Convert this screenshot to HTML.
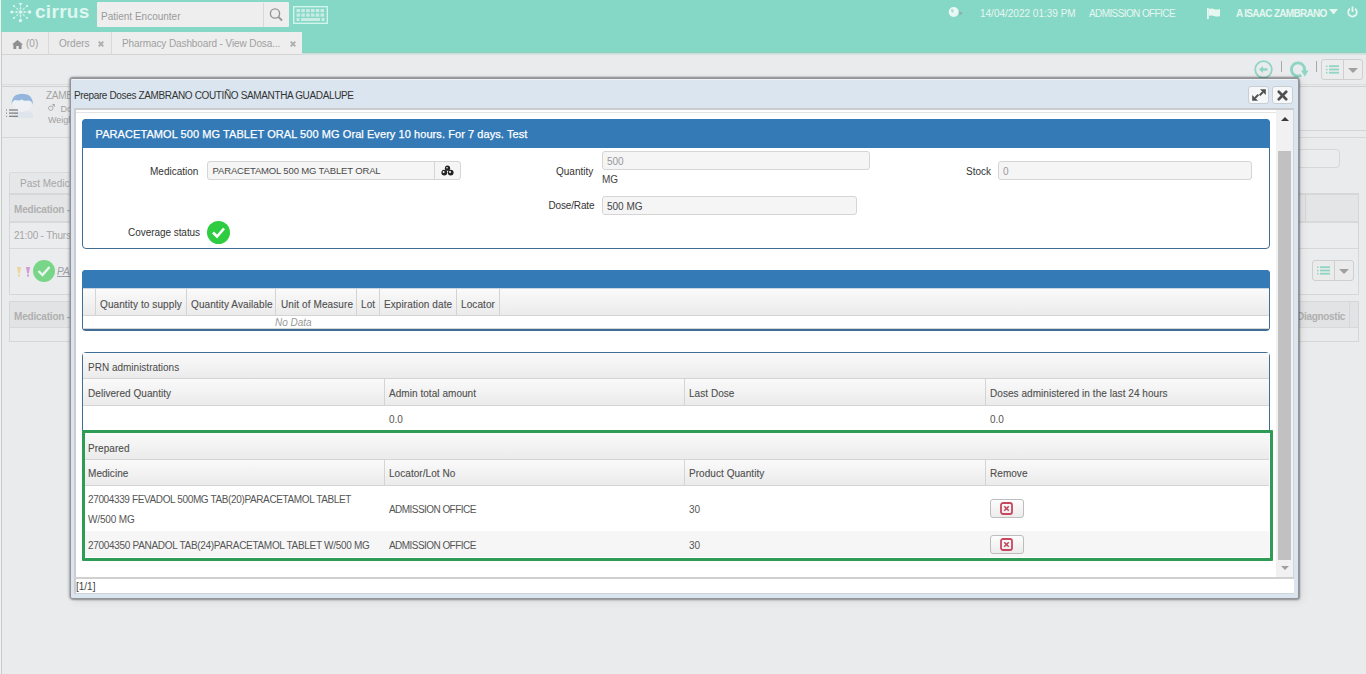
<!DOCTYPE html>
<html><head><meta charset="utf-8">
<style>
*{box-sizing:border-box;margin:0;padding:0}
html,body{width:1366px;height:674px;overflow:hidden;background:#eaebed;font-family:"Liberation Sans",sans-serif;position:relative}
.a{position:absolute}
.t{position:absolute;white-space:nowrap;line-height:1}
.th{background:linear-gradient(#fafafa,#ebebeb)}
</style></head>
<body>
<div class="a" style="left:0px;top:0px;width:1366px;height:52px;background:#86d8c6"></div>
<div class="a" style="left:0px;top:52px;width:1366px;height:1px;background:#93cbbc"></div>
<div class="a" style="left:0px;top:53px;width:1366px;height:1px;background:#c6e4de"></div>
<div class="a" style="left:0px;top:54px;width:1366px;height:1px;background:#d6e0df"></div>
<svg class="a" style="left:10px;top:2px" width="22" height="21" viewBox="0 0 22 21"><g stroke="#c8efe6" stroke-width="0.8" opacity="0.8"><line x1="10.5" y1="3" x2="10.5" y2="18"/><line x1="2" y1="10" x2="19.5" y2="10"/><line x1="4" y1="4" x2="17" y2="16"/><line x1="17" y1="4" x2="4" y2="16"/></g><g fill="#def8f2"><path d="M8.5 1 H12.5 L10.5 3.8Z"/><circle cx="10.5" cy="18.6" r="1.7"/><circle cx="1.8" cy="10" r="1.5"/><circle cx="19.6" cy="10" r="1.7"/><circle cx="4" cy="4" r="1"/><circle cx="17" cy="4" r="1.1"/><circle cx="4" cy="16" r="1.1"/><circle cx="17" cy="16" r="1"/><circle cx="10.5" cy="10" r="1.5"/><circle cx="10.5" cy="6.3" r="0.9"/><circle cx="10.5" cy="13.8" r="0.9"/><circle cx="6.5" cy="10" r="0.9"/><circle cx="14.5" cy="10" r="0.9"/><circle cx="7.3" cy="7" r="0.7"/><circle cx="13.7" cy="7" r="0.7"/><circle cx="7.3" cy="13" r="0.7"/><circle cx="13.7" cy="13" r="0.7"/></g></svg>
<div class="t" style="left:35px;top:2.12px;font-size:19px;font-weight:bold;color:#def7f1;letter-spacing:0.3px">cirrus</div>
<div class="a" style="left:97px;top:2px;width:192px;height:25px;background:#eeeeee;border-radius:1px"></div>
<div class="a" style="left:263px;top:3px;width:1px;height:24px;background:#d8d8d8"></div>
<div class="t" style="left:101px;top:11.84px;font-size:10px;color:#9a9a9a">Patient Encounter</div>
<svg class="a" style="left:268px;top:6px" width="16" height="16" viewBox="0 0 16 16"><circle cx="7" cy="7.5" r="4.6" fill="none" stroke="#959595" stroke-width="1.4"/><line x1="10.4" y1="10.9" x2="14" y2="14.5" stroke="#959595" stroke-width="1.9"/></svg>
<svg class="a" style="left:293px;top:6px" width="35" height="18" viewBox="0 0 35 18"><rect x="0.7" y="0.7" width="33.6" height="16.6" fill="none" stroke="#d5f7ef" stroke-width="1.3"/><g fill="#c9ece4"><rect x="3.5" y="3" width="3.6" height="3.2"/><rect x="8.3" y="3" width="3.6" height="3.2"/><rect x="13.1" y="3" width="3.6" height="3.2"/><rect x="17.9" y="3" width="3.6" height="3.2"/><rect x="22.7" y="3" width="3.6" height="3.2"/><rect x="27.5" y="3" width="3.6" height="3.2"/><rect x="3.5" y="7.5" width="3.6" height="3.2"/><rect x="8.3" y="7.5" width="3.6" height="3.2"/><rect x="13.1" y="7.5" width="3.6" height="3.2"/><rect x="17.9" y="7.5" width="3.6" height="3.2"/><rect x="22.7" y="7.5" width="3.6" height="3.2"/><rect x="27.5" y="7.5" width="3.6" height="3.2"/><rect x="3.5" y="12" width="3" height="3"/><rect x="8" y="12" width="19" height="3"/><rect x="28.5" y="12" width="3" height="3"/></g></svg>
<svg class="a" style="left:948px;top:6px" width="16" height="12" viewBox="0 0 16 12"><circle cx="5.7" cy="6" r="5" fill="#e8f8f4"/><path d="M3 3.5 Q4.5 2.5 5.5 4 Q6.5 5.5 5 6.5 Q4 7 3.2 5.5Z M6.5 8.5 Q7.5 8 7.5 9.5Z" fill="#b5dcd3"/><path d="M11 5 L15 7 L11.5 9.5Z" fill="#8fb0a8"/></svg>
<div class="t" style="left:980px;top:8.84px;font-size:10px;color:#e6f6f1">14/04/2022 01:39 PM</div>
<div class="t" style="left:1089px;top:8.84px;font-size:10px;color:#e6f6f1;letter-spacing:-0.6px">ADMISSION OFFICE</div>
<svg class="a" style="left:1207px;top:8px" width="14" height="11" viewBox="0 0 14 11"><rect x="0" y="0" width="1.8" height="11" fill="#e6f6f1"/><path d="M1.8 1 Q4.5 0 7 1 T13 1 L13 8 Q10 9 7 8 T1.8 8Z" fill="#e6f6f1"/></svg>
<div class="t" style="left:1236px;top:8.84px;font-size:10px;color:#e6f6f1;font-weight:bold;letter-spacing:-0.7px">A ISAAC ZAMBRANO</div>
<svg class="a" style="left:1329px;top:9px" width="9" height="6" viewBox="0 0 9 6"><path d="M0 0H9L4.5 5.5Z" fill="#e6f6f1"/></svg>
<svg class="a" style="left:1347px;top:6px" width="11" height="12" viewBox="0 0 11 12"><path d="M3 2.8 A4.3 4.3 0 1 0 8 2.8" fill="none" stroke="#e6f6f1" stroke-width="1.8"/><line x1="5.5" y1="0.5" x2="5.5" y2="6" stroke="#e6f6f1" stroke-width="1.8"/></svg>
<div class="a" style="left:2px;top:32px;width:300px;height:22px;background:#ececec"></div>
<div class="a" style="left:48px;top:32px;width:1px;height:22px;background:#d9d9d9"></div>
<div class="a" style="left:111px;top:32px;width:1px;height:22px;background:#d9d9d9"></div>
<div class="a" style="left:112px;top:32px;width:190px;height:22px;background:#eeeeee"></div>
<svg class="a" style="left:12px;top:40px" width="11" height="9" viewBox="0 0 11 9"><path d="M5.5 0 L11 4.6 L9.6 4.6 L9.6 9 L6.7 9 L6.7 6 L4.3 6 L4.3 9 L1.4 9 L1.4 4.6 L0 4.6Z" fill="#8f8f8f"/></svg>
<div class="t" style="left:26px;top:39.03px;font-size:10px;color:#a0a0a0">(0)</div>
<div class="t" style="left:59px;top:39.03px;font-size:10px;color:#a0a0a0">Orders</div>
<svg class="a" style="left:98px;top:41px" width="6" height="6" viewBox="0 0 6 6"><g stroke="#adadad" stroke-width="1.9"><line x1="0.7" y1="0.7" x2="5.3" y2="5.3"/><line x1="5.3" y1="0.7" x2="0.7" y2="5.3"/></g></svg>
<div class="t" style="left:122px;top:39.03px;font-size:10px;color:#a0a0a0;letter-spacing:-0.1px">Pharmacy Dashboard - View Dosa...</div>
<svg class="a" style="left:290px;top:41px" width="6" height="6" viewBox="0 0 6 6"><g stroke="#adadad" stroke-width="1.9"><line x1="0.7" y1="0.7" x2="5.3" y2="5.3"/><line x1="5.3" y1="0.7" x2="0.7" y2="5.3"/></g></svg>
<div class="a" style="left:2px;top:54px;width:300px;height:1px;background:#d3d3d3"></div>
<div class="a" style="left:0px;top:0px;width:1px;height:674px;background:#eef3f2"></div>
<div class="a" style="left:1px;top:32px;width:1px;height:642px;background:#c9cacb"></div>
<svg class="a" style="left:1254px;top:60px" width="19" height="19" viewBox="0 0 19 19"><circle cx="9.5" cy="9.5" r="8.3" fill="none" stroke="#8fd5c3" stroke-width="1.8"/><path d="M5 9.5 L9 6 L9 8.3 L13.5 8.3 L13.5 10.7 L9 10.7 L9 13Z" fill="#8fd5c3"/></svg>
<div class="a" style="left:1281px;top:61px;width:1px;height:11px;background:#a8a8a8"></div>
<svg class="a" style="left:1289px;top:60px" width="22" height="20" viewBox="0 0 22 20"><path d="M15.38 11.21 A6.6 6.6 0 1 0 12.30 15.22" fill="none" stroke="#8fd5c3" stroke-width="2.8"/><path d="M12 10.5 L19.5 10.5 L15.8 16.5Z" fill="#8fd5c3"/></svg>
<div class="a" style="left:1316px;top:61px;width:1px;height:11px;background:#a8a8a8"></div>
<div class="a" style="left:1321px;top:59px;width:42px;height:21px;border:1px solid #cfcfcf;border-radius:3px;background:#ececec"></div>
<div class="a" style="left:1343px;top:60px;width:1px;height:19px;background:#cfcfcf"></div>
<svg class="a" style="left:1326px;top:65px" width="14" height="9" viewBox="0 0 14 9"><g fill="#8fd5c3"><rect x="0" y="0.5" width="1.5" height="1.5"/><rect x="0" y="3.8" width="1.5" height="1.5"/><rect x="0" y="7" width="1.5" height="1.5"/><rect x="3" y="0.3" width="10" height="1.8"/><rect x="3" y="3.6" width="10" height="1.8"/><rect x="3" y="6.8" width="10" height="1.8"/></g></svg>
<svg class="a" style="left:1348px;top:68px" width="10" height="5" viewBox="0 0 10 5"><path d="M0 0H10L5 5Z" fill="#a0a0a0"/></svg>
<div class="a" style="left:2px;top:84px;width:1364px;height:1px;background:#dcdddd"></div>
<div class="a" style="left:2px;top:86px;width:1364px;height:1px;background:#d0d1d2"></div>
<svg class="a" style="left:4px;top:88px" width="36" height="36" viewBox="0 0 36 36"><path d="M10 30 L10 26 Q10 23 18 23 Q29 23 29 26 L29 30Z" fill="#dfe5ec"/><circle cx="18" cy="14.5" r="9.5" fill="#edf1f5"/><path d="M7.5 17 Q7.5 5.8 18 5.8 Q29 5.8 29 17 Q27.5 12 24 12.5 Q20 13.5 18 11.5 Q15 13 11 12 Q8 13 7.5 17Z" fill="#94b6dc"/><g fill="#7a7a7a"><rect x="2" y="21.5" width="1" height="1"/><rect x="2" y="24.6" width="1" height="1"/><rect x="2" y="27.8" width="1" height="1"/><rect x="5" y="21.4" width="9" height="1.2"/><rect x="5" y="24.5" width="9" height="1.2"/><rect x="5" y="27.7" width="9" height="1.2"/></g></svg>
<div class="t" style="left:46px;top:90.83px;font-size:10px;color:#a3a3a3;letter-spacing:-0.3px">ZAMBRANO</div>
<svg class="a" style="left:48px;top:104px" width="7" height="7" viewBox="0 0 7 7"><circle cx="2.8" cy="4.2" r="2.2" fill="none" stroke="#a8a8a8" stroke-width="0.9"/><path d="M4.4 2.6 L6.5 0.5 M4.2 0.5 H6.5 V2.8" fill="none" stroke="#a8a8a8" stroke-width="0.9"/></svg>
<div class="t" style="left:60.5px;top:104.88px;font-size:9px;color:#a3a3a3">Do</div>
<div class="t" style="left:48px;top:115.88px;font-size:9px;color:#a0a0a0">Weight</div>
<div class="a" style="left:1298px;top:130px;width:68px;height:1px;background:#d3d4d5"></div>
<div class="a" style="left:2px;top:137px;width:1364px;height:1px;background:#d6d7d8"></div>
<div class="a" style="left:1250px;top:149px;width:90px;height:19px;border:1px solid #d6d7d8;border-radius:4px;background:#ebeced"></div>
<div class="a" style="left:9px;top:172px;width:81px;height:22px;background:#e6e7e8;border:1px solid #d9dadb;border-bottom:none;border-radius:2px 2px 0 0"></div>
<div class="t" style="left:20px;top:179.03px;font-size:10px;color:#a6a6a6">Past Medications</div>
<div class="a" style="left:9px;top:193px;width:1350px;height:102px;border:1px solid #d6d7d8;border-top:2px solid #d6d7d8;background:#ebeced"></div>
<div class="a" style="left:10px;top:195px;width:1348px;height:28px;background:#e4e5e7;border-bottom:2px solid #d8d9da"></div>
<div class="t" style="left:14px;top:205.03px;font-size:10px;font-weight:bold;color:#b0b0b0;letter-spacing:-0.2px">Medication - Dose</div>
<div class="a" style="left:1305px;top:195px;width:1px;height:26px;background:#d6d7d8"></div>
<div class="t" style="left:14px;top:231.03px;font-size:10px;color:#a6a6a6;letter-spacing:-0.2px">21:00 - Thursday</div>
<div class="a" style="left:10px;top:248px;width:1348px;height:1px;background:#d6d7d8"></div>
<svg class="a" style="left:17px;top:267px" width="4" height="10" viewBox="0 0 4 10"><path d="M0 0 H4 L2.8 6.5 H1.2Z M1 7.5 H3 V9.5 H1Z" fill="#ebd59a"/></svg>
<svg class="a" style="left:26px;top:267px" width="4" height="10" viewBox="0 0 4 10"><path d="M0 0 H4 L2.8 6.5 H1.2Z M1 7.5 H3 V9.5 H1Z" fill="#d59ad3"/></svg>
<div class="a" style="left:33px;top:260px;width:22px;height:22px;border-radius:50%;background:#79d689"></div>
<svg class="a" style="left:37px;top:265px" width="14" height="12" viewBox="0 0 14 12"><path d="M1.5 6 L5.5 10 L12.5 2" fill="none" stroke="#eaf7ec" stroke-width="2.4"/></svg>
<div class="t" style="left:57px;top:266.54px;font-size:10px;font-style:italic;color:#9a9fa8;text-decoration:underline">PARACETAMOL</div>
<div class="a" style="left:1312px;top:260px;width:42px;height:21px;border:1px solid #cfcfcf;border-radius:3px;background:#ebebeb"></div>
<div class="a" style="left:1334px;top:261px;width:1px;height:19px;background:#cfcfcf"></div>
<svg class="a" style="left:1317px;top:266px" width="14" height="9" viewBox="0 0 14 9"><g fill="#8fd5c3"><rect x="0" y="0.5" width="1.5" height="1.5"/><rect x="0" y="3.8" width="1.5" height="1.5"/><rect x="0" y="7" width="1.5" height="1.5"/><rect x="3" y="0.3" width="10" height="1.8"/><rect x="3" y="3.6" width="10" height="1.8"/><rect x="3" y="6.8" width="10" height="1.8"/></g></svg>
<svg class="a" style="left:1339px;top:269px" width="10" height="5" viewBox="0 0 10 5"><path d="M0 0H10L5 5Z" fill="#a0a0a0"/></svg>
<div class="a" style="left:9px;top:301px;width:1350px;height:41px;border:1px solid #d6d7d8;background:#eaebec"></div>
<div class="a" style="left:10px;top:302px;width:1348px;height:26px;background:#e2e3e4;border-bottom:1px solid #d8d9da"></div>
<div class="t" style="left:14px;top:312.04px;font-size:10px;font-weight:bold;color:#b0b0b0;letter-spacing:-0.2px">Medication - Dose</div>
<div class="a" style="left:1349px;top:302px;width:1px;height:26px;background:#d6d7d8"></div>
<div class="t" style="left:1297px;top:312.04px;font-size:10px;font-weight:bold;color:#b0b0b0;letter-spacing:-0.3px">Diagnostic</div>
<div class="a" style="left:70px;top:78px;width:1229px;height:521px;background:#dae5ef;border:1px solid #929498;border-radius:2px;box-shadow:0 -1px 2px rgba(0,0,0,.35),1px 1px 2px rgba(0,0,0,.3),-1px 0 3px rgba(0,0,0,.2),3px 2px 8px rgba(0,0,0,.08),inset 0 1px 0 #eef3f8"></div>
<div class="t" style="left:74px;top:90.63px;font-size:10px;color:#333;letter-spacing:-0.36px">Prepare Doses ZAMBRANO COUTIÑO SAMANTHA GUADALUPE</div>
<div class="a" style="left:1248px;top:86px;width:21px;height:18px;background:#f6f7f8;border:1px solid #c9ced3;border-radius:3px"></div>
<div class="a" style="left:1272px;top:86px;width:21px;height:18px;background:#f6f7f8;border:1px solid #c9ced3;border-radius:3px"></div>
<svg class="a" style="left:1251px;top:88px" width="16" height="14" viewBox="0 0 16 14"><g fill="#505050"><path d="M14.8 1.2 L14.8 7 L9 1.2Z"/><path d="M1.2 12.8 L1.2 7 L7 12.8Z"/></g><g stroke="#505050" stroke-width="2"><line x1="12" y1="4" x2="8.6" y2="7.4"/><line x1="4" y1="10" x2="7.4" y2="6.6"/></g></svg>
<svg class="a" style="left:1277px;top:90px" width="11" height="11" viewBox="0 0 11 11"><g stroke="#505050" stroke-width="2.7" stroke-linecap="round"><line x1="1.8" y1="1.8" x2="9.2" y2="9.2"/><line x1="9.2" y1="1.8" x2="1.8" y2="9.2"/></g></svg>
<div class="a" style="left:74px;top:108px;width:1220px;height:470px;background:#fff;border-top:2px solid #c9cbcc;border-left:2px solid #cdccd0;border-right:1px solid #d0d5de"></div>
<div class="a" style="left:76px;top:112px;width:1200px;height:1px;background:#e3e3e3"></div>
<div class="a" style="left:1276px;top:110px;width:17px;height:467px;background:#f1f1f1"></div>
<div class="a" style="left:1278px;top:151px;width:13px;height:409px;background:#c1c1c1"></div>
<svg class="a" style="left:1281px;top:117px" width="8" height="4" viewBox="0 0 8 4"><path d="M0 4H8L4 0Z" fill="#3a3a3a"/></svg>
<svg class="a" style="left:1281px;top:566px" width="8" height="4" viewBox="0 0 8 4"><path d="M0 0H8L4 4Z" fill="#a0a0a0"/></svg>
<div class="a" style="left:74px;top:577px;width:1220px;height:17px;background:#fff;border-top:2px solid #d0d0d0;border-bottom:1px solid #cfd4d9;border-left:2px solid #cdccd0"></div>
<div class="t" style="left:76px;top:582.03px;font-size:10px;color:#444">[1/1]</div>
<div class="a" style="left:82px;top:119px;width:1188px;height:130px;border:1px solid #3f6d94;border-radius:4px;background:#fff"></div>
<div class="a" style="left:82px;top:119px;width:1188px;height:29px;background:#337ab7;border-radius:4px 4px 0 0"></div>
<div class="t" style="left:95.6px;top:129.19px;font-size:11px;color:#fff;-webkit-text-stroke:0.25px #fff;letter-spacing:0.07px">PARACETAMOL 500 MG TABLET ORAL 500 MG Oral Every 10 hours. For 7 days. Test</div>
<div class="t" style="left:150px;top:166.84px;font-size:10px;color:#333">Medication</div>
<div class="a" style="left:207px;top:161px;width:254px;height:19px;background:#f5f5f5;border:1px solid #d5d5d5;border-radius:3px"></div>
<div class="a" style="left:434px;top:162px;width:1px;height:17px;background:#d5d5d5"></div>
<div class="t" style="left:212.5px;top:166.06px;font-size:9.5px;color:#4a4a4a;letter-spacing:-0.15px">PARACETAMOL 500 MG TABLET ORAL</div>
<svg class="a" style="left:441px;top:165px" width="13" height="11" viewBox="0 0 13 11"><g fill="#222"><circle cx="6.5" cy="3.2" r="2.6"/><circle cx="3.3" cy="7.6" r="2.9"/><circle cx="9.7" cy="7.6" r="2.9"/></g><g fill="#fff"><circle cx="2.6" cy="7" r="1"/><circle cx="9" cy="7" r="1"/><circle cx="6" cy="2.7" r=".8"/></g></svg>
<div class="t" style="left:556px;top:166.84px;font-size:10px;color:#333">Quantity</div>
<div class="a" style="left:602px;top:151px;width:268px;height:19px;background:#f5f5f5;border:1px solid #d5d5d5;border-radius:3px"></div>
<div class="t" style="left:607px;top:157.03px;font-size:10px;color:#999">500</div>
<div class="t" style="left:602px;top:174.84px;font-size:10px;color:#444">MG</div>
<div class="t" style="left:548.5px;top:201.03px;font-size:10px;color:#333;letter-spacing:-0.15px">Dose/Rate</div>
<div class="a" style="left:602px;top:196px;width:255px;height:19px;background:#f5f5f5;border:1px solid #d5d5d5;border-radius:3px"></div>
<div class="t" style="left:607px;top:201.53px;font-size:10px;color:#444">500 MG</div>
<div class="t" style="left:966px;top:166.84px;font-size:10px;color:#333">Stock</div>
<div class="a" style="left:998px;top:161px;width:254px;height:19px;background:#f5f5f5;border:1px solid #d5d5d5;border-radius:3px"></div>
<div class="t" style="left:1003px;top:166.84px;font-size:10px;color:#999">0</div>
<div class="t" style="left:128px;top:228.03px;font-size:10px;color:#333;letter-spacing:-0.05px">Coverage status</div>
<div class="a" style="left:207px;top:221px;width:23px;height:23px;border-radius:50%;background:#2ecc40"></div>
<svg class="a" style="left:211px;top:226px" width="15" height="13" viewBox="0 0 15 13"><path d="M2 6.5 L6 10.5 L13 2.5" fill="none" stroke="#fff" stroke-width="2.6"/></svg>
<div class="a" style="left:82px;top:270px;width:1188px;height:61px;border:1px solid #3f6d94;border-bottom:2px solid #3f6d94;border-radius:4px;background:#fff"></div>
<div class="a" style="left:82px;top:270px;width:1188px;height:18px;background:#337ab7;border-radius:4px 4px 0 0"></div>
<div class="a" style="left:83px;top:288px;width:1186px;height:1px;background:#c9d5e1"></div>
<div class="a" style="left:83px;top:289px;width:1186px;height:27px;border-bottom:1px solid #d4d4d4;background:linear-gradient(#fafafa,#ebebeb)"></div>
<div class="a" style="left:95px;top:289px;width:1px;height:27px;background:#d4d4d4"></div>
<div class="a" style="left:186px;top:289px;width:1px;height:27px;background:#d4d4d4"></div>
<div class="a" style="left:275px;top:289px;width:1px;height:27px;background:#d4d4d4"></div>
<div class="a" style="left:356px;top:289px;width:1px;height:27px;background:#d4d4d4"></div>
<div class="a" style="left:379px;top:289px;width:1px;height:27px;background:#d4d4d4"></div>
<div class="a" style="left:456px;top:289px;width:1px;height:27px;background:#d4d4d4"></div>
<div class="a" style="left:499px;top:289px;width:1px;height:27px;background:#d4d4d4"></div>
<div class="t" style="left:100px;top:299.54px;font-size:10px;color:#505050;-webkit-text-stroke:0.12px #505050;letter-spacing:0.1px">Quantity to supply</div>
<div class="t" style="left:191px;top:299.54px;font-size:10px;color:#505050;-webkit-text-stroke:0.12px #505050;letter-spacing:0.1px">Quantity Available</div>
<div class="t" style="left:281px;top:299.54px;font-size:10px;color:#505050;-webkit-text-stroke:0.12px #505050;letter-spacing:0.1px">Unit of Measure</div>
<div class="t" style="left:361px;top:299.54px;font-size:10px;color:#505050;-webkit-text-stroke:0.12px #505050;letter-spacing:0.1px">Lot</div>
<div class="t" style="left:384px;top:299.54px;font-size:10px;color:#505050;-webkit-text-stroke:0.12px #505050;letter-spacing:0.1px">Expiration date</div>
<div class="t" style="left:461px;top:299.54px;font-size:10px;color:#505050;-webkit-text-stroke:0.12px #505050;letter-spacing:0.1px">Locator</div>
<div class="a" style="left:83px;top:328px;width:1186px;height:1px;background:#d3d6d9"></div>
<div class="t" style="left:275px;top:318.04px;font-size:10px;color:#999;font-style:italic">No Data</div>
<div class="a" style="left:82px;top:352px;width:1188px;height:82px;border:1px solid #3f6d94;border-radius:4px;background:#fff"></div>
<div class="a" style="left:83px;top:353px;width:1186px;height:26px;border-bottom:1px solid #d4d4d4;background:linear-gradient(#fafafa,#ebebeb)"></div>
<div class="t" style="left:88px;top:362.74px;font-size:10px;color:#4a4a4a">PRN administrations</div>
<div class="a" style="left:83px;top:379px;width:1186px;height:27px;border-bottom:1px solid #d4d4d4;background:linear-gradient(#fafafa,#ebebeb)"></div>
<div class="a" style="left:384px;top:379px;width:1px;height:27px;background:#d4d4d4"></div>
<div class="a" style="left:684px;top:379px;width:1px;height:27px;background:#d4d4d4"></div>
<div class="a" style="left:985px;top:379px;width:1px;height:27px;background:#d4d4d4"></div>
<div class="t" style="left:88px;top:389.04px;font-size:10px;color:#505050;-webkit-text-stroke:0.12px #505050;letter-spacing:0.05px">Delivered Quantity</div>
<div class="t" style="left:389px;top:389.04px;font-size:10px;color:#505050;-webkit-text-stroke:0.12px #505050;letter-spacing:0.05px">Admin total amount</div>
<div class="t" style="left:689px;top:389.04px;font-size:10px;color:#505050;-webkit-text-stroke:0.12px #505050;letter-spacing:0.05px">Last Dose</div>
<div class="t" style="left:990px;top:389.04px;font-size:10px;color:#505050;-webkit-text-stroke:0.12px #505050;letter-spacing:0.05px">Doses administered in the last 24 hours</div>
<div class="t" style="left:389px;top:415.04px;font-size:10px;color:#555">0.0</div>
<div class="t" style="left:990px;top:415.04px;font-size:10px;color:#555">0.0</div>
<div class="a" style="left:82px;top:430px;width:1191px;height:131px;border:3px solid #2f9c56;border-radius:1px;background:#fff"></div>
<div class="a" style="left:85px;top:433px;width:1184px;height:27px;border-bottom:1px solid #d4d4d4;background:linear-gradient(#fafafa,#ebebeb)"></div>
<div class="t" style="left:88px;top:444.04px;font-size:10px;color:#505050;-webkit-text-stroke:0.12px #505050;letter-spacing:0.05px">Prepared</div>
<div class="a" style="left:85px;top:460px;width:1184px;height:26px;border-bottom:1px solid #d4d4d4;background:linear-gradient(#fafafa,#ebebeb)"></div>
<div class="a" style="left:384px;top:460px;width:1px;height:26px;background:#d4d4d4"></div>
<div class="a" style="left:684px;top:460px;width:1px;height:26px;background:#d4d4d4"></div>
<div class="a" style="left:985px;top:460px;width:1px;height:26px;background:#d4d4d4"></div>
<div class="t" style="left:88px;top:469.04px;font-size:10px;color:#505050;-webkit-text-stroke:0.12px #505050;letter-spacing:0.05px">Medicine</div>
<div class="t" style="left:389px;top:469.04px;font-size:10px;color:#505050;-webkit-text-stroke:0.12px #505050;letter-spacing:0.05px">Locator/Lot No</div>
<div class="t" style="left:689px;top:469.04px;font-size:10px;color:#505050;-webkit-text-stroke:0.12px #505050;letter-spacing:0.05px">Product Quantity</div>
<div class="t" style="left:990px;top:469.04px;font-size:10px;color:#505050;-webkit-text-stroke:0.12px #505050;letter-spacing:0.05px">Remove</div>
<div class="a" style="left:85px;top:531px;width:1184px;height:26px;background:#f6f6f6"></div>
<div class="t" style="left:88px;top:495.04px;font-size:10px;color:#555;letter-spacing:-0.37px">27004339 FEVADOL 500MG TAB(20)PARACETAMOL TABLET</div>
<div class="t" style="left:88px;top:515.03px;font-size:10px;color:#555;letter-spacing:-0.15px">W/500 MG</div>
<div class="t" style="left:389px;top:505.04px;font-size:10px;color:#555;letter-spacing:-0.55px">ADMISSION OFFICE</div>
<div class="t" style="left:689px;top:505.04px;font-size:10px;color:#555">30</div>
<div class="t" style="left:88px;top:541.03px;font-size:10px;color:#555;letter-spacing:-0.3px">27004350 PANADOL TAB(24)PARACETAMOL TABLET W/500 MG</div>
<div class="t" style="left:389px;top:541.03px;font-size:10px;color:#555;letter-spacing:-0.55px">ADMISSION OFFICE</div>
<div class="t" style="left:689px;top:541.03px;font-size:10px;color:#555">30</div>
<div class="a" style="left:990px;top:499px;width:34px;height:19px;background:linear-gradient(#fdfdfd,#ececec);border:1px solid #bdbdbd;border-radius:3px"></div>
<svg class="a" style="left:1000px;top:502px" width="13" height="13" viewBox="0 0 13 13"><rect x="1" y="1" width="11" height="11" rx="2" fill="none" stroke="#c7485e" stroke-width="1.8"/><g stroke="#c7485e" stroke-width="1.6"><line x1="4.2" y1="4.2" x2="8.8" y2="8.8"/><line x1="8.8" y1="4.2" x2="4.2" y2="8.8"/></g></svg>
<div class="a" style="left:990px;top:535px;width:34px;height:19px;background:linear-gradient(#fdfdfd,#ececec);border:1px solid #bdbdbd;border-radius:3px"></div>
<svg class="a" style="left:1000px;top:538px" width="13" height="13" viewBox="0 0 13 13"><rect x="1" y="1" width="11" height="11" rx="2" fill="none" stroke="#c7485e" stroke-width="1.8"/><g stroke="#c7485e" stroke-width="1.6"><line x1="4.2" y1="4.2" x2="8.8" y2="8.8"/><line x1="8.8" y1="4.2" x2="4.2" y2="8.8"/></g></svg>
</body></html>
